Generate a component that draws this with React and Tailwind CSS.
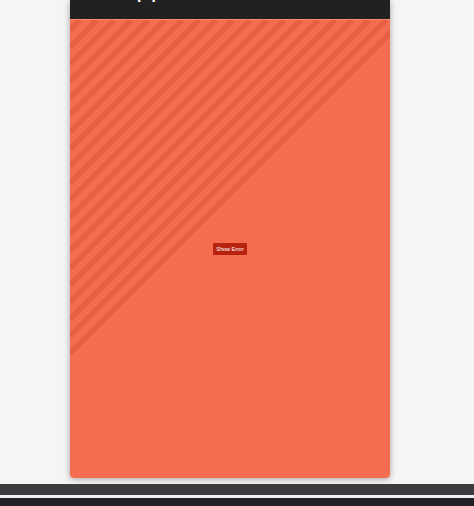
import React from 'react'

const STRIPES = Array.from({ length: 20 }, (_, i) => 333 - i * 17)

export default function App() {
  return (
    <div className="w-[474px] h-[506px] overflow-hidden bg-[#f5f5f5] font-['Liberation_Sans',sans-serif]">
      {/* card area */}
      <div className="h-[484px] pl-[70px]">
        <div className="w-[320px] h-[478px] flex flex-col rounded-b-[4px] overflow-hidden shadow-[0_1px_6px_rgba(0,0,0,0.35)]">
          {/* header, title is scrolled off the top */}
          <div className="h-[20px] shrink-0 bg-[#212121] overflow-hidden relative border-b border-[#f48a70]">
            <div className="absolute left-[49px] top-[-27px] text-[26px] leading-[30px] text-white">App</div>
          </div>

          {/* body */}
          <div className="relative flex-1 bg-[#f46d4e] flex items-center justify-center">
            <svg className="absolute left-0 top-0" width="320" height="340" viewBox="0 0 320 340">
              {STRIPES.map((k) => (
                <line key={k} x1="0" y1={k} x2={k} y2="0" stroke="#e95f41" strokeWidth="5.5" strokeLinecap="butt" />
              ))}
            </svg>
            <button className="relative px-[3px] h-[12px] bg-[#b8230f] text-white text-[5.5px] leading-[12px] rounded-[1px]">
              Show Error
            </button>
          </div>
        </div>
      </div>

      {/* bottom bars */}
      <div className="h-[11px] bg-[#3c3c40]"></div>
      <div className="h-[3px] bg-[#eeeeee]"></div>
      <div className="h-[8px] bg-[#222226]"></div>
    </div>
  )
}
